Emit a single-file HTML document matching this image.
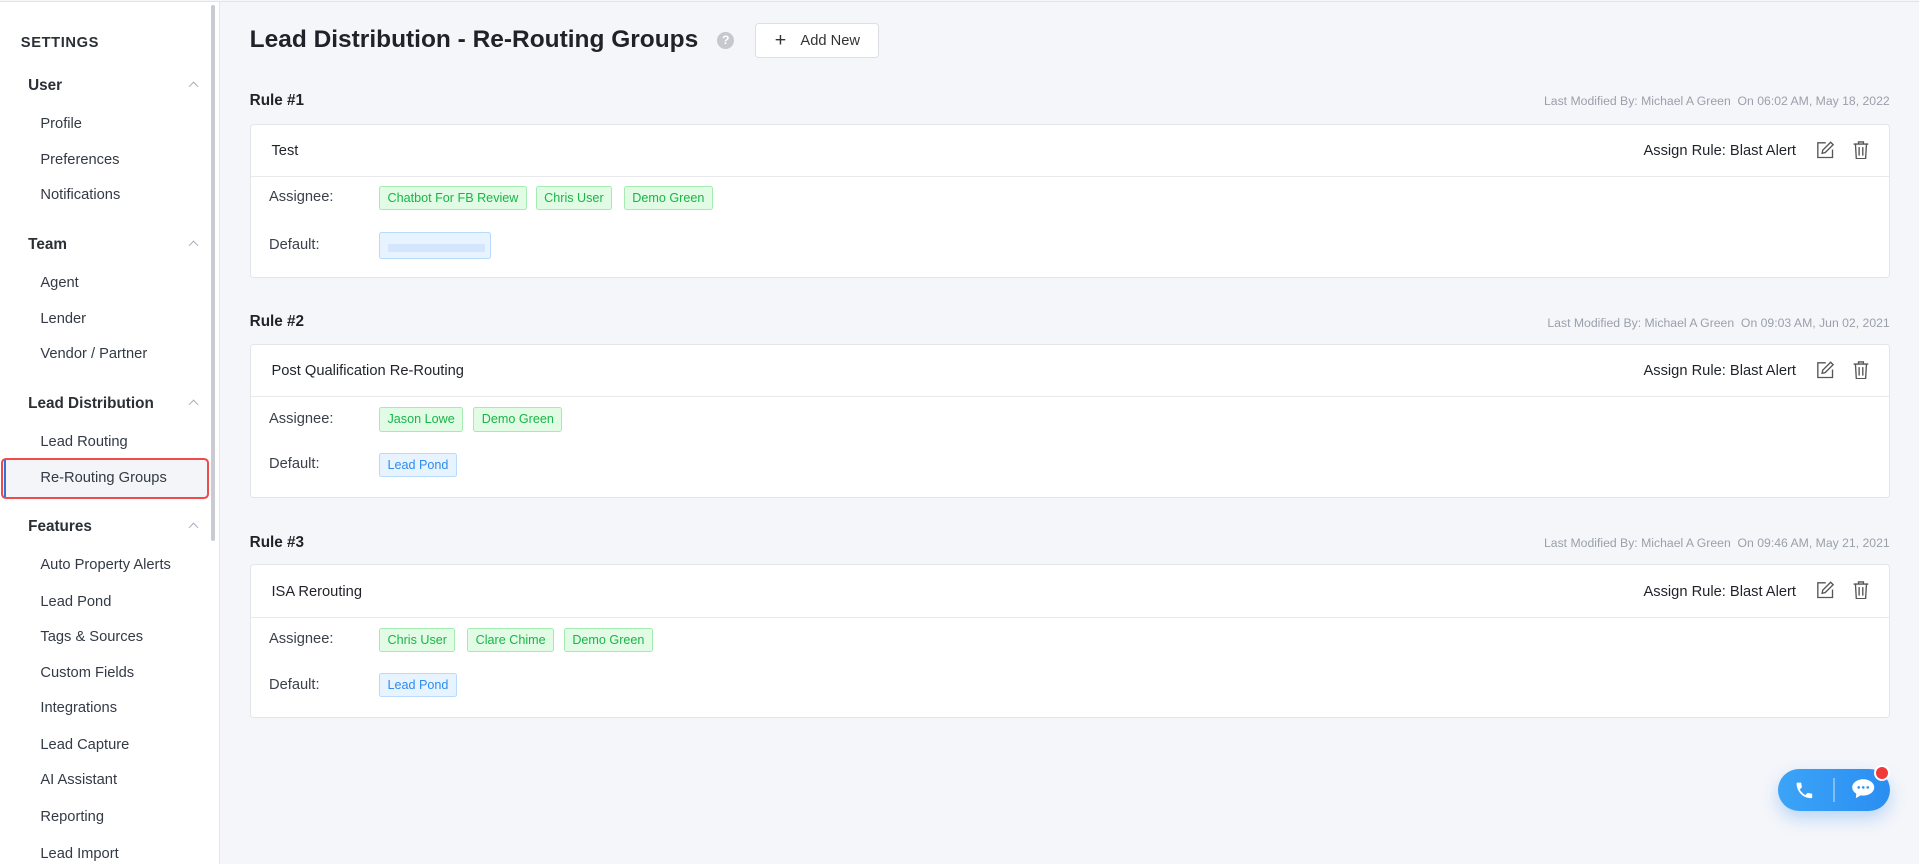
<!DOCTYPE html>
<html><head><meta charset="utf-8">
<style>
html,body{margin:0;padding:0;width:1919px;height:864px;overflow:hidden;background:#f5f6fa;}
#w{zoom:1.2239;width:1568px;height:706px;position:relative;font-family:"Liberation Sans",sans-serif;color:#1f2329;}
.a{position:absolute;white-space:nowrap;}
#side{position:absolute;left:0;top:2px;width:179px;height:704px;background:#fff;border-right:1px solid #e4e6eb;}
.sh{font-size:12.5px;font-weight:bold;color:#2b2f36;left:23px;}
.si{font-size:12px;color:#333a45;left:33px;}
.chev{left:155px;width:5px;height:5px;border-left:1px solid #aab;border-top:1px solid #aab;transform:rotate(45deg);}
.card{position:absolute;left:204px;width:1340px;height:126px;background:#fff;border:1px solid #e3e5ea;border-radius:3px;box-sizing:border-box;}
.card .hd{position:absolute;left:0;right:0;top:0;height:42px;border-bottom:1px solid #e8e9ed;}
.rule{font-size:12.5px;font-weight:bold;left:204px;}
.mod{font-size:10px;color:#9aa0ab;right:24px;}
.tag{position:absolute;height:20px;line-height:19px;font-size:10.3px;padding:0 6px;box-sizing:border-box;border-radius:2px;}
.g{background:#e1fbe5;border:1px solid #a5ecb2;color:#19b548;}
.b{background:#e7f3ff;border:1px solid #b7dafd;color:#2d8cf0;}
.lbl{font-size:12px;color:#3b404a;left:15px;}
.ct{font-size:12px;}
</style></head><body><div id="w">
<div class="a" style="left:0;top:1px;width:1568px;height:1px;background:#e2e4e8"></div>
<div id="side"></div>
<div class="a" style="left:172px;top:4px;width:4px;height:438px;background:#c9cbd0;border-radius:2px"></div>
<div class="a" style="left:17px;top:29px;font-size:12px;font-weight:bold;letter-spacing:0.5px;color:#2b2f36">SETTINGS</div>

<div class="a sh" style="top:63px">User</div><div class="a chev" style="top:68px"></div>
<div class="a si" style="top:95px">Profile</div>
<div class="a si" style="top:124px">Preferences</div>
<div class="a si" style="top:153px">Notifications</div>
<div class="a sh" style="top:193px">Team</div><div class="a chev" style="top:198px"></div>
<div class="a si" style="top:225px">Agent</div>
<div class="a si" style="top:254px">Lender</div>
<div class="a si" style="top:283px">Vendor / Partner</div>
<div class="a sh" style="top:323px">Lead Distribution</div><div class="a chev" style="top:328px"></div>
<div class="a si" style="top:355px">Lead Routing</div>
<div class="a" style="left:1px;top:374px;width:170px;height:34px;background:#f3f5f9;border:2px solid #f04a4a;border-radius:4px;box-sizing:border-box"></div>
<div class="a" style="left:3px;top:376px;width:2px;height:30px;background:#3b6fd8"></div>
<div class="a si" style="top:384px">Re-Routing Groups</div>
<div class="a sh" style="top:423px">Features</div><div class="a chev" style="top:428px"></div>
<div class="a si" style="top:455px">Auto Property Alerts</div>
<div class="a si" style="top:485px">Lead Pond</div>
<div class="a si" style="top:514px">Tags &amp; Sources</div>
<div class="a si" style="top:543px">Custom Fields</div>
<div class="a si" style="top:572px">Integrations</div>
<div class="a si" style="top:602px">Lead Capture</div>
<div class="a si" style="top:631px">AI Assistant</div>
<div class="a si" style="top:661px">Reporting</div>
<div class="a si" style="top:691px">Lead Import</div>

<div class="a" style="left:204px;top:21px;font-size:20px;font-weight:bold;color:#1f2329">Lead Distribution - Re-Routing Groups</div>
<div class="a" style="left:586px;top:26px;width:14px;height:14px;border-radius:50%;background:#c5c8ce;color:#fff;font-size:10px;text-align:center;line-height:14px;font-weight:bold">?</div>
<div class="a" style="left:617px;top:19px;width:101px;height:28px;background:#fff;border:1px solid #dcdfe5;border-radius:3px;box-sizing:border-box"></div>
<div class="a" style="left:633px;top:24px;font-size:16px;color:#333">+</div>
<div class="a" style="left:654px;top:27px;font-size:12px;color:#333">Add New</div>

<!-- rules -->
<div class="a rule" style="top:75px">Rule #1</div>
<div class="a mod" style="top:77px">Last Modified By: Michael A Green&nbsp; On 06:02 AM, May 18, 2022</div>
<div class="card" style="top:101px">
 <div class="hd"></div>
 <div class="a ct" style="left:17px;top:15px">Test</div>
 <div class="a ct" style="left:1138px;top:15px">Assign Rule: Blast Alert</div>
 <svg class="a" style="left:1279px;top:13px" width="15" height="15" viewBox="0 0 15 15" fill="none" stroke="#555" stroke-width="1.1"><path d="M8 1.5H1.5v12h12V7"/><path d="M12 1l2 2-6.5 6.5-2.5.5.5-2.5z"/></svg>
 <svg class="a" style="left:1309px;top:13px" width="13" height="15" viewBox="0 0 13 15" fill="none" stroke="#555" stroke-width="1.1"><path d="M0.5 2.5h12M4.5 2.5V.8h4v1.7M2 2.5l.7 12h7.6l.7-12M5 5v7M8 5v7"/></svg>
 <div class="a lbl" style="top:53px">Assignee:</div>
 <div class="tag g" style="left:105px;top:50px">Chatbot For FB Review</div>
 <div class="tag g" style="left:233px;top:50px">Chris User</div>
 <div class="tag g" style="left:305px;top:50px">Demo Green</div>
 <div class="a lbl" style="top:92px">Default:</div>
 <div class="tag b" style="left:105px;top:88px;width:91px;height:22px"><div style="margin-top:9px;height:6px;background:#d3e6fb;width:80px"></div></div>
</div>

<div class="a rule" style="top:256px">Rule #2</div>
<div class="a mod" style="top:258px">Last Modified By: Michael A Green&nbsp; On 09:03 AM, Jun 02, 2021</div>
<div class="card" style="top:281px">
 <div class="hd"></div>
 <div class="a ct" style="left:17px;top:15px">Post Qualification Re-Routing</div>
 <div class="a ct" style="left:1138px;top:15px">Assign Rule: Blast Alert</div>
 <svg class="a" style="left:1279px;top:13px" width="15" height="15" viewBox="0 0 15 15" fill="none" stroke="#555" stroke-width="1.1"><path d="M8 1.5H1.5v12h12V7"/><path d="M12 1l2 2-6.5 6.5-2.5.5.5-2.5z"/></svg>
 <svg class="a" style="left:1309px;top:13px" width="13" height="15" viewBox="0 0 13 15" fill="none" stroke="#555" stroke-width="1.1"><path d="M0.5 2.5h12M4.5 2.5V.8h4v1.7M2 2.5l.7 12h7.6l.7-12M5 5v7M8 5v7"/></svg>
 <div class="a lbl" style="top:54px">Assignee:</div>
 <div class="tag g" style="left:105px;top:51px">Jason Lowe</div>
 <div class="tag g" style="left:182px;top:51px">Demo Green</div>
 <div class="a lbl" style="top:91px">Default:</div>
 <div class="tag b" style="left:105px;top:88px">Lead Pond</div>
</div>

<div class="a rule" style="top:436px">Rule #3</div>
<div class="a mod" style="top:438px">Last Modified By: Michael A Green&nbsp; On 09:46 AM, May 21, 2021</div>
<div class="card" style="top:461px">
 <div class="hd"></div>
 <div class="a ct" style="left:17px;top:15px">ISA Rerouting</div>
 <div class="a ct" style="left:1138px;top:15px">Assign Rule: Blast Alert</div>
 <svg class="a" style="left:1279px;top:13px" width="15" height="15" viewBox="0 0 15 15" fill="none" stroke="#555" stroke-width="1.1"><path d="M8 1.5H1.5v12h12V7"/><path d="M12 1l2 2-6.5 6.5-2.5.5.5-2.5z"/></svg>
 <svg class="a" style="left:1309px;top:13px" width="13" height="15" viewBox="0 0 13 15" fill="none" stroke="#555" stroke-width="1.1"><path d="M0.5 2.5h12M4.5 2.5V.8h4v1.7M2 2.5l.7 12h7.6l.7-12M5 5v7M8 5v7"/></svg>
 <div class="a lbl" style="top:54px">Assignee:</div>
 <div class="tag g" style="left:105px;top:51px">Chris User</div>
 <div class="tag g" style="left:177px;top:51px">Clare Chime</div>
 <div class="tag g" style="left:256px;top:51px">Demo Green</div>
 <div class="a lbl" style="top:91px">Default:</div>
 <div class="tag b" style="left:105px;top:88px">Lead Pond</div>
</div>

<!-- chat widget -->
<div class="a" style="left:1453px;top:628px;width:91px;height:35px;border-radius:18px;background:linear-gradient(90deg,#3ca4f7,#2a8ef2);box-shadow:0 6px 14px rgba(45,140,240,0.3)"></div>
<div class="a" style="left:1498px;top:636px;width:1px;height:19px;background:#7cc0fa"></div>
<svg class="a" style="left:1466px;top:637px" width="17" height="17" viewBox="0 0 24 24"><path fill="#fff" d="M6.6 10.8c1.4 2.8 3.8 5.1 6.6 6.6l2.2-2.2c.3-.3.7-.4 1-.2 1.1.4 2.3.6 3.6.6.6 0 1 .4 1 1V20c0 .6-.4 1-1 1C10.6 21 3 13.4 3 4c0-.6.4-1 1-1h3.5c.6 0 1 .4 1 1 0 1.3.2 2.5.6 3.6.1.3 0 .7-.2 1z"/></svg>
<svg class="a" style="left:1512px;top:636px" width="20" height="18" viewBox="0 0 20 18"><path fill="#fff" d="M10 1C5 1 1 4 1 7.7c0 2.1 1.3 3.9 3.3 5.1L4 16.5l3.9-2.3c.7.1 1.4.2 2.1.2 5 0 9-3 9-6.7S15 1 10 1z"/><circle cx="6.3" cy="7.7" r="1.1" fill="#2d95f4"/><circle cx="10" cy="7.7" r="1.1" fill="#2d95f4"/><circle cx="13.7" cy="7.7" r="1.1" fill="#2d95f4"/></svg>
<div class="a" style="left:1531px;top:625px;width:10px;height:10px;border-radius:50%;background:#f03a3a;border:2px solid #fff"></div>
</div></body></html>
